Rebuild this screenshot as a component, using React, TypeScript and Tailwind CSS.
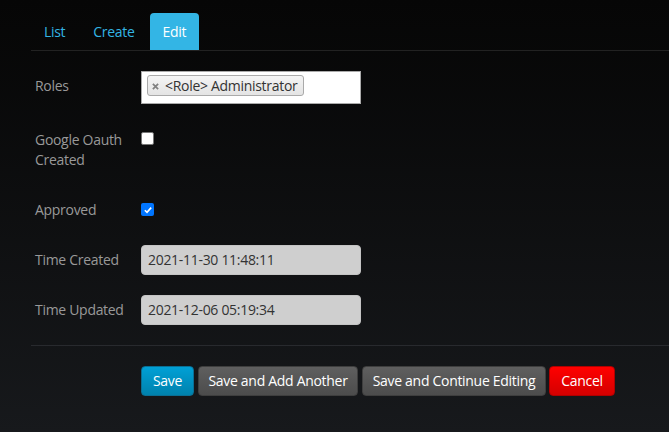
const tabs = ['List', 'Create', 'Edit'];

const Checkbox = ({ checked }: { checked?: boolean }) =>
  checked ? (
    <span className="flex h-[13px] w-[13px] items-center justify-center rounded-[2px] bg-[#0075ff]">
      <svg viewBox="0 0 12 12" className="h-[10px] w-[10px]">
        <path d="M2.2 6.3 L4.8 8.8 L9.8 3.2" fill="none" stroke="#fff" strokeWidth="2" />
      </svg>
    </span>
  ) : (
    <span className="block h-[13px] w-[13px] rounded-[2px] border border-[#767676] bg-white" />
  );

const Label = ({ children }: { children: React.ReactNode }) => (
  <div className="w-[110px] shrink-0 pl-1 pr-[10px] text-[#999999]">{children}</div>
);

const App = () => {
  return (
    <div
      className="min-h-[432px] bg-gradient-to-b from-[#060606] to-[#17191c] pl-[31px] text-[14px] leading-[20px] tracking-[-0.3px]"
      style={{ fontFamily: '"Open Sans", "Noto Sans", sans-serif' }}
    >
      <div className="flex border-b border-[#222222] pt-[13px]">
        {tabs.map((tab) => (
          <div
            key={tab}
            className={`mr-[2px] rounded-t-[4px] px-[13px] pt-[9px] pb-2 ${
              tab === 'Edit' ? 'bg-[#33b5e5] text-white' : 'text-[#33b5e5]'
            }`}
          >
            {tab}
          </div>
        ))}
      </div>

      <div className="mt-[20px] flex">
        <Label>
          <div className="pt-[5px]">Roles</div>
        </Label>
        <div className="h-[33px] w-[220px] border border-[#aaaaaa] bg-white px-[5px] pt-[3px]">
          <span className="inline-flex h-[21px] items-center rounded-[3px] border border-[#aaaaaa] bg-gradient-to-b from-[#f4f4f4] to-[#e4e4e4] pl-[4px] pr-[6px] text-[#333333]">
            <svg viewBox="0 0 8 8" className="mr-[6px] mt-[2px] h-[7px] w-[7px]">
              <path d="M1 1 L7 7 M7 1 L1 7" stroke="#808080" strokeWidth="2" />
            </svg>
            {'<Role> Administrator'}
          </span>
        </div>
      </div>

      <div className="mt-[26px] flex">
        <Label>Google Oauth Created</Label>
        <div className="pt-[2px]">
          <Checkbox />
        </div>
      </div>

      <div className="mt-[30px] flex">
        <Label>Approved</Label>
        <div className="pt-[3px]">
          <Checkbox checked />
        </div>
      </div>

      <div className="mt-[25px] flex items-center">
        <Label>Time Created</Label>
        <div className="flex h-[30px] w-[220px] items-center rounded-[4px] border border-[#c4c4c4] bg-[#cfcfcf] px-[6px] text-[#333333]">
          2021-11-30 11:48:11
        </div>
      </div>

      <div className="mt-[20px] flex items-center">
        <Label>Time Updated</Label>
        <div className="flex h-[30px] w-[220px] items-center rounded-[4px] border border-[#c4c4c4] bg-[#cfcfcf] px-[6px] text-[#333333]">
          2021-12-06 05:19:34
        </div>
      </div>

      <div className="mt-[20px] border-t border-[#282a2e]" />

      <div className="mt-[20px] flex gap-[4px] pl-[110px]">
        <button className="h-[30px] w-[53px] rounded-[4px] border border-[#0a6f94] bg-gradient-to-b from-[#00a0d6] to-[#0082ad] text-white">
          Save
        </button>
        <button className="h-[30px] w-[160px] rounded-[4px] border border-[#3e3e3e] bg-gradient-to-b from-[#5f5f5f] to-[#4c4c4c] text-white">
          Save and Add Another
        </button>
        <button className="h-[30px] w-[184px] rounded-[4px] border border-[#3e3e3e] bg-gradient-to-b from-[#5f5f5f] to-[#4c4c4c] text-white">
          Save and Continue Editing
        </button>
        <button className="ml-[-1px] h-[30px] w-[66px] rounded-[4px] border border-[#b00000] bg-gradient-to-b from-[#ff0000] to-[#d40000] text-white">
          Cancel
        </button>
      </div>
    </div>
  );
};

export default App;
